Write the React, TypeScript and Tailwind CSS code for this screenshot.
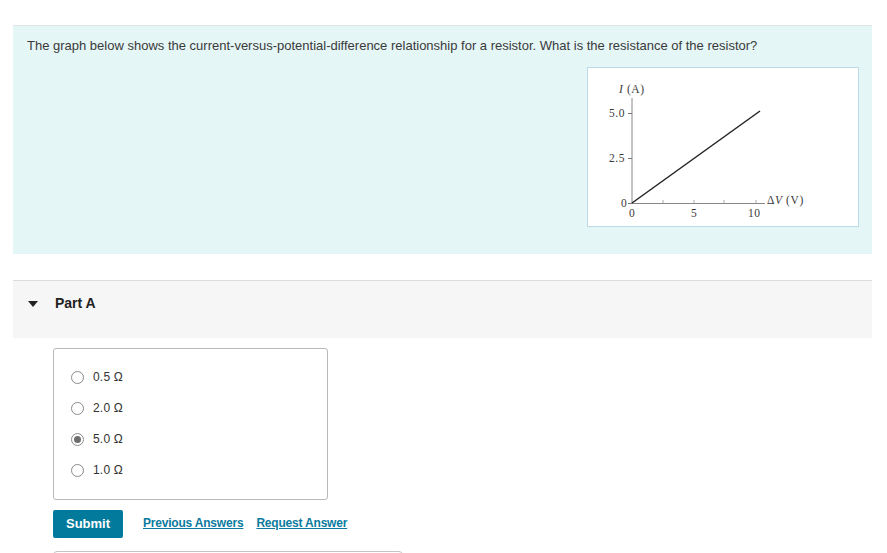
import React from "react";

function Graph() {
  const serif = { fontFamily: '"Liberation Serif", "DejaVu Serif", serif', letterSpacing: "0.6px" };
  return (
    <svg width="270" height="158" viewBox="0 0 270 158" className="block">
      <g fill="none">
        <line x1="44" y1="30" x2="44" y2="135.5" stroke="#888" />
        <line x1="44" y1="135.5" x2="177" y2="135.5" stroke="#888" />
        <line x1="40" y1="45.5" x2="44" y2="45.5" stroke="#777" />
        <line x1="40" y1="90.5" x2="44" y2="90.5" stroke="#777" />
        <line x1="40" y1="135.5" x2="44" y2="135.5" stroke="#777" />
        <line x1="75" y1="132" x2="75" y2="135" stroke="#aaa" />
        <line x1="106" y1="132" x2="106" y2="135" stroke="#aaa" />
        <line x1="136" y1="132" x2="136" y2="135" stroke="#aaa" />
        <line x1="168" y1="132" x2="168" y2="135" stroke="#aaa" />
        <line x1="44" y1="135" x2="172" y2="43" stroke="#222" strokeWidth="1.5" />
      </g>
      <g fill="#3a3a3a" fontSize="11.5" style={serif}>
        <text x="31" y="25"><tspan fontStyle="italic">I</tspan> (A)</text>
        <text x="21" y="49">5.0</text>
        <text x="21" y="94">2.5</text>
        <text x="33" y="139">0</text>
        <text x="41" y="149">0</text>
        <text x="103" y="149">5</text>
        <text x="160" y="149">10</text>
        <text x="179" y="136">Δ<tspan fontStyle="italic">V</tspan> (V)</text>
      </g>
    </svg>
  );
}

function Radio({ checked }: { checked?: boolean }) {
  return (
    <span className="flex h-[13px] w-[13px] items-center justify-center rounded-full border border-[#8a8a8a] bg-white">
      {checked && <span className="h-[7px] w-[7px] rounded-full bg-[#6e6e6e]" />}
    </span>
  );
}

export default function App() {
  const options = ["0.5 Ω", "2.0 Ω", "5.0 Ω", "1.0 Ω"];
  return (
    <div
      className="h-[553px] w-[887px] overflow-hidden bg-white text-[#333]"
      style={{ fontFamily: '"Liberation Sans", Arial, sans-serif' }}
    >
      <div className="pl-[13px] pr-[15px] pt-[25px]">
        <div className="h-[229px] border-t border-[#dde3e6] bg-[#e5f6f7] pl-[14px] pr-[13px] pt-[12px]">
          <p className="text-[13px] leading-[16px] text-[#3a3a3a]">
            The graph below shows the current-versus-potential-difference relationship for a resistor. What is the resistance of the resistor?
          </p>
          <div className="mt-[13px] flex justify-end">
            <div className="h-[160px] w-[272px] border border-[#bcd9e8] bg-white">
              <Graph />
            </div>
          </div>
        </div>

        <div className="mt-[26px] flex h-[58px] items-start border-t border-[#dcdcdc] bg-[#f6f6f6] pl-[15px] pt-[14px]">
          <svg width="10" height="6" viewBox="0 0 10 6" className="mr-[17px] mt-[6px]">
            <path d="M0 0 L10 0 L5 6 Z" fill="#222" />
          </svg>
          <span className="text-[14px] leading-[16px] font-bold text-[#222]">Part A</span>
        </div>

        <div className="ml-[40px] mt-[10px] flex h-[152px] w-[275px] flex-col gap-[18px] rounded-[3px] border border-[#b8b8b8] pl-[17px] pt-[22px]">
          {options.map((o, i) => (
            <div key={o} className="flex h-[13px] items-center gap-[9px]">
              <Radio checked={i === 2} />
              <span className="text-[12px] leading-[13px] tracking-[0.2px] text-[#333]">{o}</span>
            </div>
          ))}
        </div>

        <div className="ml-[40px] mt-[10px] flex items-center">
          <button className="h-[28px] w-[70px] rounded-[2px] bg-[#027a9b] text-[13px] font-bold text-white">
            Submit
          </button>
          <a className="ml-[20px] -mt-[2px] text-[12px] font-bold tracking-[-0.2px] text-[#0a7aa0] underline">Previous Answers</a>
          <a className="ml-[13px] -mt-[2px] text-[12px] font-bold tracking-[-0.2px] text-[#0a7aa0] underline">Request Answer</a>
        </div>

        <div className="ml-[40px] mt-[13px] h-[20px] w-[350px] rounded-t-[4px] border border-[#c4c4c4]" />
      </div>
    </div>
  );
}
